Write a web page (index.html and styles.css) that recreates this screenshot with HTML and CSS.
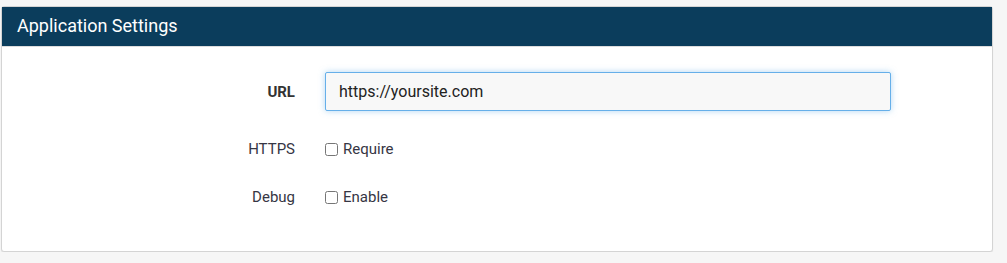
FILE: index.html
```html
<!DOCTYPE html>
<html lang="en">

<head>
    <meta charset="UTF-8">
    <title>Application Settings</title>
    <link rel="stylesheet" href="styles.css">
</head>

<body>
    <div class="panel">
        <div class="panel-heading">Application Settings</div>
        <form class="panel-body settings-form">
            <label class="form-label strong" for="url">URL</label>
            <input id="url" class="form-input" type="text" value="https://yoursite.com">

            <span class="form-label">HTTPS</span>
            <label class="check"><input type="checkbox"> Require</label>

            <span class="form-label">Debug</span>
            <label class="check"><input type="checkbox"> Enable</label>
        </form>
    </div>
</body>

</html>
```

FILE: styles.css
```css
body {
    font-family: Roboto, "Liberation Sans", Arial, sans-serif;
    margin: 0;
    padding: 6px 14px 0 1px;
    background-color: #f6f6f6;
    color: #333;
}

.panel {
    background-color: #fff;
    border: 1px solid #d4d4d4;
    border-radius: 3px;
    box-shadow: 0 1px 1px rgba(0, 0, 0, 0.08);
}

.panel-heading {
    background-color: #0b3d5c;
    color: #fff;
    font-size: 18px;
    height: 39px;
    line-height: 38px;
    padding-left: 15px;
    border-bottom: 1px solid #ddd;
}

.settings-form {
    display: grid;
    grid-template-columns: 293px 566px;
    column-gap: 30px;
    row-gap: 28px;
    align-items: center;
    padding: 25px 0 44px 0;
    margin: 0;
}

.form-label {
    text-align: right;
    font-size: 15px;
    color: #363644;
}

.form-label.strong {
    font-weight: bold;
    color: #333;
}

.form-input {
    box-sizing: border-box;
    height: 39px;
    width: 100%;
    padding: 0 13px;
    font-family: inherit;
    font-size: 16px;
    color: #222;
    background-color: #f8f8f8;
    border: 1px solid #66afe9;
    border-radius: 2px;
    box-shadow: 0 0 6px rgba(102, 175, 233, 0.5);
    outline: none;
}

.check {
    display: flex;
    align-items: center;
    height: 20px;
    font-size: 15px;
    color: #363644;
}

.check input {
    margin: 0 5px 0 0;
    width: 13px;
    height: 13px;
}
```
